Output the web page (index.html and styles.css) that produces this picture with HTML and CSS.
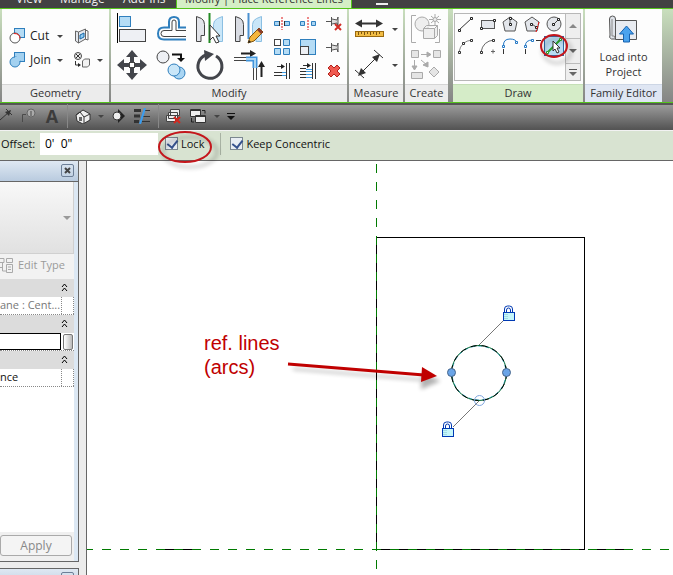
FILE: index.html
```
<!DOCTYPE html>
<html lang="en">
<head>
    <meta charset="UTF-8">
    <title>Place Reference Lines</title>
    <link rel="stylesheet" href="styles.css">
</head>
<body>
    <!-- Ribbon tabs -->
    <nav class="tabs">
        <a href="#" class="tab tab-view">View</a>
        <a href="#" class="tab tab-manage">Manage</a>
        <a href="#" class="tab tab-addins">Add-Ins</a>
        <a href="#" class="tab active">Modify | Place Reference Lines</a>
        <button class="tab-toggle" aria-label="Minimize ribbon"><i class="box"></i></button>
    </nav>

    <!-- Ribbon panels -->
    <div class="ribbon">
        <section class="panel geometry">
            <div class="panel-body">
                <button class="tool"><svg width="16" height="16"><rect x="5.500" y=".5" width="10" height="9" fill="#b5dcf5" stroke="#2f7fbd"/><circle cx="6" cy="10" r="5" fill="#fff" stroke="#555"/><path d="M5 5.500q6 0 6 5" fill="none" stroke="#e22"/></svg>Cut</button>
                <button class="drop" aria-label="Cut options"></button>
                <button class="tool" aria-label="Split face"><svg width="16" height="16"><path d="M1.500 3l3 1 7-3v10l-7 4-3-2z" fill="#e4e8ee" stroke="#666"/><path d="M4.500 4v11M11 2l3 1v9l-3-1" fill="none" stroke="#666"/><path d="M6 7l4-2v4l-4 2z" fill="#8ecbf2" stroke="#1767a8"/></svg></button>
                <span></span>
                <button class="tool"><svg width="16" height="16"><rect x="5.500" y=".5" width="10" height="9" fill="#a3d1f0" stroke="#2f7fbd"/><circle cx="6" cy="10" r="5" fill="#a3d1f0" stroke="#2f7fbd"/><path d="M6 6h4v3" fill="none" stroke="#a3d1f0" stroke-width="2"/></svg>Join</button>
                <button class="drop" aria-label="Join options"></button>
                <button class="tool" aria-label="Demolish"><svg width="16" height="16"><circle cx="4" cy="4" r="3.500" fill="#eee" stroke="#444"/><path d="M2 2l4 4M6 2L2 6M1.500 9v4H5" fill="none" stroke="#333"/><path d="M4 11l3 2-3 2z" fill="#222"/><path d="M8.500 9l2-2h5v6l-2 2h-5z" fill="#f3f3f3" stroke="#666"/></svg></button>
                <button class="drop" aria-label="Demolish options"></button>
            </div>
            <h2>Geometry</h2>
        </section>

        <section class="panel modify">
            <div class="panel-body">
                <div class="big-tools">
                    <button aria-label="Align"><svg width="32" height="32"><path d="M1.500 1v30" stroke="#000"/><rect x="3.500" y="4.500" width="11" height="10" fill="#b5dcf5" stroke="#2f7fbd"/><rect x="3.500" y="17.500" width="26" height="12" fill="#eef0f4" stroke="#444"/></svg></button>
                    <button aria-label="Offset"><svg width="32" height="32"><path d="M31 15.500h-7V10q0-5-5-5t-5 5v5.500H9q-6 0-6 6t6 6h22" fill="none" stroke="#2f7fbd" stroke-width="2"/><path d="M31 18.500H21V10q0-2-2-2t-2 2v8.500H9q-3 0-3 3t3 3h22" fill="none" stroke="#444"/></svg></button>
                    <button aria-label="Mirror - Pick Axis"><svg width="32" height="32"><path d="M2.500 4.500l5 2q3 2 3 6v11H7v6H2.500z" fill="#e3e5ea" stroke="#444"/><path d="M28.500 4.500l-5 2q-4 2-4 6v11H23v6h5.500z" fill="#c9e6f8" stroke="#8bbfe2"/><path d="M15.500 1v30" stroke="#238b23" stroke-width="2"/><path d="M16 13v15l3-3 3 6 3-1-3-6h4z" fill="#fff" stroke="#333"/></svg></button>
                    <button aria-label="Mirror - Draw Axis"><svg width="32" height="32"><path d="M2.500 4.500l5 2q3 2 3 6v11H7v6H2.500z" fill="#d9dce3" stroke="#444"/><path d="M28.500 4.500l-5 2q-4 2-4 6v11H23v6h5.500z" fill="#c9e6f8" stroke="#8bbfe2"/><path d="M15.500 1v26" stroke="#4b91d0" stroke-width="2"/><path d="M15 31l2-6 9-9 4 4-9 9z" fill="#f4b63e" stroke="#80530d"/><path d="M24 18l2-2 4 4-2 2z" fill="#8d3d2d"/><path d="M15 31l1-3 2 2z" fill="#222"/></svg></button>
                    <button aria-label="Move"><svg width="32" height="32"><path d="M16 1l6 7h-4v5h-4V8h-4zM16 31l6-7h-4v-5h-4v5h-4zM1 16l7-6v4h5v4H8v4zM31 16l-7-6v4h-5v4h5v4z" fill="#43454b"/><rect x="13.500" y="13.500" width="5" height="5" fill="#fff" stroke="#444"/></svg></button>
                    <button aria-label="Copy"><svg width="32" height="32"><circle cx="8" cy="8" r="6" fill="#eef0f4" stroke="#444"/><path d="M17 5.500h9v4" fill="none" stroke="#111" stroke-width="2"/><path d="M22 9h8l-4 4z" fill="#111"/><circle cx="24" cy="24" r="6" fill="#a9d5f3" stroke="#2f7fbd"/><circle cx="19" cy="21" r="6" fill="#c9e6f8" stroke="#2f7fbd"/></svg></button>
                    <button aria-label="Rotate"><svg width="32" height="32"><path d="M12 6A12 12 0 1 0 22 7" fill="none" stroke="#43454b" stroke-width="3"/><path d="M10 1l10 4-9 7z" fill="#43454b"/></svg></button>
                    <button aria-label="Trim"><svg width="32" height="32"><path d="M8 4.500h10M28.500 28V17" stroke="#222" stroke-width="2"/><path d="M17 1l6 3.500-6 3.500zM25 18l3.500-6 3.500 6z" fill="#222"/><path d="M1 8.500h12M1 11.500h12M20.500 19v12M23.500 19v12" stroke="#444"/><path d="M13 10h9v9" fill="none" stroke="#4295dc" stroke-width="5"/><path d="M13 10h9v9" fill="none" stroke="#a9d5f3" stroke-width="2"/></svg></button>
                </div>
                <div class="small-tools">
                    <button aria-label="Split element"><svg width="18" height="18"><path d="M1.500 7.500h5v4h-5zM11.500 7.500h5v4h-5z" fill="#a9d5f3" stroke="#2f7fbd"/><path d="M6.500 7v5M11.500 7v5" stroke="#333"/><path d="M9 3v13" stroke="#d11" stroke-dasharray="2 1"/></svg></button>
                    <button aria-label="Split with gap"><svg width="18" height="18"><path d="M1.500 7.500h4v4h-4zM12.500 7.500h4v4h-4z" fill="#a9d5f3" stroke="#2f7fbd"/><path d="M9 3v13" stroke="#d11" stroke-dasharray="2 1"/></svg></button>
                    <button aria-label="Unpin"><svg width="18" height="18"><path d="M1 7.500h5M6.500 3v9M7 5l5 1 1-3v9l-1-3-5 1" fill="#ddd" stroke="#555"/><path d="M10 10l6 6M16 10l-6 6" stroke="#d22d25" stroke-width="2"/></svg></button>
                    <button aria-label="Array"><svg width="18" height="18"><rect x="1.500" y="1.500" width="6" height="6" fill="#fff" stroke="#444"/><path d="M10.500 1.500h6v6h-6zM1.500 10.500h6v6h-6zM10.500 10.500h6v6h-6z" fill="#b5dcf5" stroke="#2f7fbd"/></svg></button>
                    <button aria-label="Scale"><svg width="18" height="18"><rect x="1.500" y="1.500" width="15" height="15" fill="#b5dcf5" stroke="#2f7fbd"/><rect x="1.500" y="8.500" width="8" height="8" fill="#eef0f4" stroke="#444"/></svg></button>
                    <button aria-label="Pin"><svg width="18" height="18"><path d="M1 9.500h5M6.500 5v9M7 7l5 1 1-3v9l-1-3-5 1" fill="#ddd" stroke="#555"/></svg></button>
                    <button aria-label="Trim single"><svg width="18" height="18"><path d="M4 4.500h5M1 10.500h8M1 13.500h8M13.500 1v16M16.500 1v16" stroke="#333"/><path d="M8 2l4 2.500L8 7z" fill="#222"/><path d="M9 10.500h4M9 13.500h4" stroke="#3e9be0"/></svg></button>
                    <button aria-label="Trim multiple"><svg width="18" height="18"><path d="M4 3.500h5M1 6.500h6M1 9.500h6M1 12.500h6M1 15.500h6M13.500 1v16M16.500 1v16" stroke="#333"/><path d="M8 1l4 2.500L8 6z" fill="#222"/><path d="M7 7.500h6M7 9.500h6M7 12.500h6M7 15.500h6" stroke="#3e9be0"/></svg></button>
                    <button aria-label="Delete"><svg width="18" height="18"><path d="M3 6l3-3 3 3 3-3 3 3-3 3 3 3-3 3-3-3-3 3-3-3 3-3z" fill="#f05a50" stroke="#b3221b"/></svg></button>
                </div>
            </div>
            <h2>Modify</h2>
        </section>

        <section class="panel measure">
            <div class="panel-body">
                <button aria-label="Measure"><svg width="32" height="32"><path d="M5 10.500h20" stroke="#333" stroke-width="2"/><path d="M1 10.500l7-4v8zM29 10.500l-7-4v8z" fill="#333"/><rect x="1.500" y="18.500" width="28" height="5" fill="#f2bd45" stroke="#9a6a10"/><path d="M4.500 19v3M7.500 19v2M10.500 19v3M13.500 19v2M16.500 19v3M19.500 19v2M22.500 19v3M25.500 19v2" stroke="#7a5410"/></svg></button>
                <button class="drop" aria-label="Measure options"></button>
                <button aria-label="Dimension"><svg width="32" height="32"><path d="M6 25L24 7M1 21l9 8M20 1l9 8" stroke="#333"/><path d="M4 27l3-8 5 5zM26 5l-8 3 5 5z" fill="#333"/></svg></button>
                <button class="drop" aria-label="Dimension options"></button>
            </div>
            <h2>Measure</h2>
        </section>

        <section class="panel create">
            <div class="panel-body">
                <button disabled aria-label="Create group"><svg width="32" height="32" fill="#eee" stroke="#aaa"><path d="M6 2.500H1.500v27H6M25 29.500h4.500V16" fill="none"/><circle cx="12" cy="11" r="7"/><path d="M13.500 15.500l3-3h11v10l-3 3h-11zM13.500 15.500h11l3-3M24.500 15.500v10"/><path d="M25 1v11M19 6.500h12M21 3l8 7M29 3l-8 7"/><circle cx="25" cy="6.500" r="2"/></svg></button>
                <button disabled aria-label="Create similar"><svg width="32" height="32" fill="#e5e5e5" stroke="#aaa"><path d="M1.500 1.500h7v7h-7zM23.500 1.500h7v7h-7zM1.500 23.500h11v6h-11zM24 18l5 5-5 5-5-5z"/><path d="M11 5.500h8M4.500 11v7M11 11l6 5" fill="none"/><path d="M17 3l4 2.500-4 2.500zM2 17h5l-2.500 4zM13 16l5-3v5z" fill="#aaa"/></svg></button>
            </div>
            <h2>Create</h2>
        </section>

        <section class="panel draw">
            <div class="panel-body">
                <div class="gallery">
                    <div class="shapes">
                        <button aria-label="Line"><svg width="18" height="18"><path d="M2 15L15 3" stroke="#333"/><path d="M1.500 14.500h2v2h-2zM13.500 2.500h2v2h-2z" fill="#fff" stroke="#222"/></svg></button>
                        <button aria-label="Rectangle"><svg width="18" height="18"><rect x="2.500" y="5.500" width="13" height="8" fill="#e3e6eb" stroke="#555"/><path d="M1.500 12.500h2v2h-2zM14.500 4.500h2v2h-2z" fill="#fff" stroke="#222"/></svg></button>
                        <button aria-label="Inscribed polygon"><svg width="18" height="18"><path d="M9 2l7 5-2 9H4L2 7zM9 9V3" fill="#e3e6eb" stroke="#555"/><path d="M8.500 8.500h2v2h-2zM8.500 2.500h2v2h-2z" fill="#fff" stroke="#222"/></svg></button>
                        <button aria-label="Circumscribed polygon"><svg width="18" height="18"><path d="M9 2l7 5-2 9H4L2 7zM9 9l4 3" fill="#e3e6eb" stroke="#555"/><path d="M7.500 8.500h2v2h-2zM12.500 11.500h2v2h-2z" fill="#fff" stroke="#222"/><path d="M16 7l-3 10" stroke="#e11" stroke-dasharray="3 1"/></svg></button>
                        <button aria-label="Circle"><svg width="18" height="18"><circle cx="9" cy="9" r="7" fill="#e3e6eb" stroke="#555"/><path d="M9 9l4-4" stroke="#444"/><path d="M7.500 8.500h2v2h-2zM12.500 3.500h2v2h-2z" fill="#fff" stroke="#222"/></svg></button>
                        <button aria-label="Start-end-radius arc"><svg width="18" height="18"><path d="M2 15Q4 4 15 3" fill="none" stroke="#888"/><path d="M1.500 14.500h2v2h-2zM5.500 5.500h2v2h-2zM13.500 2.500h2v2h-2z" fill="#fff" stroke="#333"/></svg></button>
                        <button aria-label="Center-ends arc"><svg width="18" height="18"><path d="M2 15Q4 4 15 3M12 14.500h4M14 12.500v4" fill="none" stroke="#666"/><path d="M1.500 14.500h2v2h-2zM13.500 2.500h2v2h-2z" fill="#fff" stroke="#333"/></svg></button>
                        <button aria-label="Tangent end arc"><svg width="18" height="18"><path d="M2.500 9Q2 2 9 2q6 0 7 4" fill="none" stroke="#2478c5"/><path d="M2.500 12v5" stroke="#333"/><path d="M1.500 8.500h2v2h-2zM14.500 4.500h2v2h-2z" fill="#fff" stroke="#2478c5"/></svg></button>
                        <button aria-label="Fillet arc"><svg width="18" height="18"><path d="M2.500 9Q2 3 10 3" fill="none" stroke="#2478c5"/><path d="M2.500 12v5M13 3.500h5" stroke="#333"/><path d="M1.500 8.500h2v2h-2zM8.500 2.500h2v2h-2z" fill="#fff" stroke="#2478c5"/></svg></button>
                        <button class="selected" aria-label="Pick lines"><svg width="18" height="18"><path d="M3 15L15 3" stroke="#29a329" stroke-width="2"/><path d="M1.500 14.500h2v2h-2zM14.500 1.500h2v2h-2z" fill="#fff" stroke="#29a329"/><path d="M8 4v10l2-2 2 4 2-1-2-4h3z" fill="#fff" stroke="#333"/></svg>
                            <svg class="callout pick-ring" width="40" height="34"><ellipse class="soft" cx="21" cy="20" rx="14" ry="12"/><ellipse class="ring" cx="18" cy="15" rx="13" ry="11"/></svg></button>
                    </div>
                    <div class="scroller">
                        <button class="up" aria-label="Scroll up"></button>
                        <button class="down" aria-label="Scroll down"></button>
                        <button class="more" aria-label="More"></button>
                    </div>
                </div>
            </div>
            <h2>Draw</h2>
        </section>

        <section class="panel family">
            <div class="panel-body">
                <button class="load"><svg width="32" height="28"><path d="M7.500 5.500h21v19h-21z" fill="#e9ecf1" stroke="#555"/><path d="M1.500 4q0-3 3-3t3 3v20h-4q-3-1-1.500-4z" fill="#dfe3e9" stroke="#555"/><path d="M4 4v17q3-1 3 2" fill="none" stroke="#888"/><path d="M18.500 11l7 8h-4v8h-6v-8h-4z" fill="#4ba3ee" stroke="#1662b0"/></svg>
                    <span>Load into<br>Project</span></button>
            </div>
            <h2>Family Editor</h2>
        </section>
    </div>

    <!-- Quick access toolbar -->
    <div class="quick">
        <button aria-label="Aligned dimension"><svg width="14" height="16"><path d="M0 12l9-8M6 1l6 6" stroke="#333"/><path d="M11 2L5 4l4 4z" fill="#333"/></svg></button>
        <button aria-label="Tag"><svg width="16" height="16"><circle cx="10" cy="5" r="4" fill="#aaa" stroke="#666"/><path d="M10 3v5M5 6.500H1.500V14" fill="none" stroke="#4a4a4a"/></svg></button>
        <button class="text-tool">A</button>
        <i class="sep"></i>
        <button aria-label="3D view"><svg width="16" height="16"><path d="M1 7l7-5 7 4v6l-7 4-6-3z" fill="#eee" stroke="#333"/><path d="M1 7l4-3 4 5v6M9 9l6-3" fill="none" stroke="#333"/><path d="M4 9h3v4H4z" fill="#666"/></svg></button>
        <button class="drop" aria-label="3D options"></button>
        <button aria-label="Section"><svg width="16" height="16"><path d="M8 1l7 7-7 7z" fill="#222"/><circle cx="7" cy="8" r="4" fill="#eee" stroke="#333"/></svg></button>
        <button aria-label="Thin lines"><svg width="18" height="16"><path d="M1 2.500h7M1 8h6M1 13.500h5" stroke="#333" stroke-width="3"/><path d="M11 2.500h6M10 8.500h7M9 13.500h8" stroke="#333"/><path d="M12 0L7 16" stroke="#3a9df0" stroke-width="2"/></svg></button>
        <i class="sep"></i>
        <button aria-label="Close hidden windows"><svg width="16" height="16"><path d="M4.500 1.500h9v6h-9zM2.500 4.500h9v6h-9zM.5 7.500h9v6h-9z" fill="#eee" stroke="#444"/><path d="M8 9l6 6M14 9l-6 6" stroke="#d3271e" stroke-width="2"/></svg></button>
        <button aria-label="Switch windows"><svg width="18" height="16"><path d="M1.500 1.500h10v7h-10zM6.500 7.500h10v7h-10z" fill="#eee" stroke="#333"/><path d="M1 2.500h11M6 8.500h11" stroke="#333"/><path d="M13 2.500h3v3M2.500 10v4H5" fill="none" stroke="#222"/></svg></button>
        <button class="drop" aria-label="Window options"></button>
        <button class="customize" aria-label="Customize"></button>
    </div>

    <!-- Options bar -->
    <form class="options">
        <label for="offset">Offset:</label>
        <input type="text" id="offset" value="0'  0&quot;">
        <div class="check lock">
            <input type="checkbox" id="lock" checked>
            <label for="lock">Lock</label>
            <svg class="callout lock-ring" width="64" height="42"><ellipse class="soft" cx="33" cy="22" rx="27" ry="15"/><ellipse class="ring" cx="28" cy="17" rx="26" ry="15"/></svg>
        </div>
        <div class="check">
            <input type="checkbox" id="concentric" checked>
            <label for="concentric">Keep Concentric</label>
        </div>
    </form>

    <div class="workspace">
        <div class="dock">
            <aside class="palette">
                <header><button class="close" aria-label="Close"><svg width="7" height="7"><path d="M1 1l5 5M6 1L1 6" stroke="#444" stroke-width="2"/></svg></button></header>
                <button class="type-selector" aria-label="Type selector"><i class="arrow"></i></button>
                <button class="edit-type" disabled><svg width="14" height="16" fill="none" stroke="#aaa"><path d="M0 1.500h4v4H0M6.500 1.500h6v4h-6zM2.500 6v8H6M0 10.500h3"/><path d="M6.500 7.500h6v8h-6zM8 10h3M8 12.500h3"/></svg>Edit Type</button>
                <h3><svg class="chevrons" width="7" height="8"><path d="M1 4l2.500-3L6 4M1 8l2.500-3L6 8"/></svg></h3>
                <div class="prop muted"><span>ane : Cent...</span><i></i></div>
                <h3><svg class="chevrons" width="7" height="8"><path d="M1 4l2.500-3L6 4M1 8l2.500-3L6 8"/></svg></h3>
                <div class="prop"><input type="text" aria-label="Value"><button aria-label="Associate parameter"></button></div>
                <h3><svg class="chevrons" width="7" height="8"><path d="M1 4l2.500-3L6 4M1 8l2.500-3L6 8"/></svg></h3>
                <div class="prop"><span>nce</span><i></i></div>
                <footer><button disabled>Apply</button></footer>
            </aside>
            <aside class="palette next"><header><button class="close" aria-label="Close browser"></button></header></aside>
        </div>

        <main class="canvas">
            <svg width="100%" height="100%">
                <rect x="289.500" y="76.500" width="208" height="312" fill="none" stroke="#000"/>
                <path d="M78 388.500h36M501 388.500h37" stroke="#000"/>
                <!-- reference planes -->
                <path d="M289.500 3V600M-3 388.500H2000" stroke="#007a00" stroke-dasharray="9 9"/>
                <!-- picked arcs -->
                <path d="M392 184l24-24M392 240l-26 26" stroke="#777"/>
                <circle cx="392" cy="212" r="27" fill="none" stroke="#3ba5d8" stroke-dasharray="4 3"/>
                <circle cx="392" cy="212" r="27.500" fill="none" stroke="#063"/>
                <circle cx="392" cy="212" r="27.500" fill="none" stroke="#000" stroke-dasharray="6 5"/>
                <g fill="#6ba5e8" stroke="#47668c"><circle cx="364.500" cy="211.500" r="4"/><circle cx="419.500" cy="211.500" r="4"/></g>
                <circle cx="392.500" cy="239.500" r="5" fill="none" stroke="#82a8e0"/>
                <g id="padlock" stroke="#0039b3"><path d="M417.500 151v-3q0-3 3-3h2q3 0 3 3v3M419.500 151v-2q0-2 2-2t2 2v2" fill="none"/><rect x="416.500" y="151.500" width="11" height="8" fill="#c5f6fa"/><path d="M418 153v6M420 153v6" stroke="#7fc4cf" stroke-dasharray="1 1"/></g>
                <use href="#padlock" x="-61" y="116"/>
                <!-- annotation -->
                <path class="shadow" d="M206 208l132 11M336 213l15 7-16 7z"/>
                <path d="M201 203l136 11" stroke="#c00000" stroke-width="3"/>
                <path d="M335 206l15 9-16 6z" fill="#c00000"/>
                <text class="note"><tspan x="117" y="189">ref. lines</tspan><tspan x="117" y="213">(arcs)</tspan></text>
            </svg>
        </main>
    </div>
</body>
</html>
```
FILE: styles.css
```
* { box-sizing: border-box; }
body { margin: 0; height: 100vh; display: flex; flex-direction: column; overflow: hidden; font: 11px/16px "Open Sans", sans-serif; color: #222; background: #fff; }
button { margin: 0; padding: 0; border: 0; background: none; font: inherit; color: inherit; }
svg { display: block; }
h2, h3 { margin: 0; font: inherit; }

/* tabs */
.tabs { display: flex; align-items: flex-end; flex: none; height: 8px; background: #424242; overflow: hidden; }
.tab { color: #eee; text-decoration: none; line-height: 16px; font-size: 12px; height: 17px; white-space: nowrap; }
.tab-view { width: 44px; margin-left: 16px; }
.tab-manage { width: 63px; }
.tab-addins { width: 53px; }
.tab.active { padding: 0 8px; font-size: 11px; color: #333; background: #d5efc6; border: solid #54c41c; border-width: 0 1px; }
.tab-toggle { height: 8px; margin-left: 24px; }
.tab-toggle .box { display: block; width: 12px; height: 2px; background: #eee; }

/* ribbon */
.ribbon { display: flex; flex: none; gap: 2px; padding-left: 2px; border: solid #54c41c; border-width: 1px 0; background: linear-gradient(#c9dfbd, #858585); }
.panel { display: flex; flex-direction: column; background: #fdfdfd; }
.panel-body { height: 75px; }
.panel h2 { height: 18px; line-height: 16px; text-align: center; color: #333; background: #ececec; border-top: 1px solid #d5d5d5; white-space: nowrap; }
.geometry { width: 107px; }
.geometry .panel-body { display: grid; grid-template-columns: 45px 20px 20px 10px; grid-template-rows: 24px 24px; align-items: center; padding: 15px 0 0 7px; }
.tool { display: flex; gap: 5px; align-items: center; font-size: 12px; }
.drop { width: 5px; height: 16px; display: flex; align-items: center; }
.drop::before { content: ""; border: solid transparent; border-width: 3px 3px 0; border-top-color: #444; }
.geometry .drop { margin-left: 3px; }
.modify { width: 236px; }
.modify .panel-body { display: flex; gap: 8px; padding: 3px 0 0 5px; }
.big-tools { display: grid; grid-template-columns: repeat(4, 32px); gap: 5px 7px; align-content: start; }
.small-tools { display: grid; grid-template-columns: repeat(3, 18px); gap: 6px 8px; align-content: start; padding-top: 2px; }
.measure { width: 54px; }
.measure .panel-body { display: grid; grid-template-columns: 32px 5px; gap: 4px 6px; align-content: start; align-items: center; padding: 4px 0 0 5px; }
.create { width: 43px; }
.create .panel-body { padding: 4px 0 0 5px; display: grid; gap: 4px; align-content: start; }
.draw { width: 130px; margin-left: 3px; }
.draw h2 { background: #d5ecc8; border-color: #c5dfb7; }
.draw .panel-body { padding: 4px 2px 3px 1px; }
.gallery { display: flex; height: 68px; border: 1px solid #b7b7b7; }
.shapes { flex: 1; display: grid; grid-template-columns: repeat(5, 18px); gap: 4px; align-content: start; padding: 1px 0 0 2px; }
.shapes button { width: 18px; height: 18px; }
.selected { position: relative; background: #b9dcf2; outline: 1px solid #2d6ca8; }
.scroller { width: 15px; display: flex; flex-direction: column; border-left: 1px solid #bbb; background: #eee; }
.scroller button { flex: 1; display: flex; align-items: center; justify-content: center; border-bottom: 1px solid #bbb; }
.scroller button::before { content: ""; border: 4px solid transparent; border-top-color: #666; border-bottom: 0; }
.scroller .up::before { border-top: 0; border-bottom: 4px solid #888; }
.scroller .more { flex: none; height: 16px; border: 0; flex-direction: column; gap: 2px; }
.scroller .more::after { content: ""; order: -1; width: 8px; height: 1px; background: #555; }
.family { width: 77px; }
.family h2 { background: #dfe6f3; border-color: #cdd6e5; }
.load { display: flex; flex-direction: column; align-items: center; gap: 6px; width: 100%; padding-top: 6px; line-height: 15px; color: #333; }

/* red rings over a control */
.callout { position: absolute; pointer-events: none; z-index: 2; overflow: visible; }
.ring { fill: none; stroke: #c4161c; stroke-width: 2; }
.soft { fill: none; stroke: #000; stroke-width: 3; opacity: .2; filter: blur(2px); }
.pick-ring { left: -9px; top: -6px; }
.lock-ring { left: -8px; top: -3px; }

/* quick access toolbar */
.quick { display: flex; flex: none; align-items: center; gap: 7px; height: 27px; padding-bottom: 2px; border: solid #555; border-width: 2px 0 1px; background: linear-gradient(#9b9b9b, #555); }
.text-tool { width: 16px; font: bold 18px/20px "Open Sans", sans-serif; color: #3c3c3c; }
.sep { width: 1px; height: 24px; background: #888; }
.customize { width: 8px; margin-left: 1px; }
.customize::before { content: ""; display: block; height: 1px; background: #111; margin-bottom: 2px; }
.customize::after { content: ""; display: block; width: 0; border: 4px solid transparent; border-top-color: #111; border-bottom: 0; }

/* options bar */
.options { display: flex; flex: none; align-items: center; height: 30px; padding-bottom: 4px; border-top: 1px solid #f2f2f2; background: #d8e3d1; color: #111; }
.options > label { width: 40px; padding-left: 1px; }
#offset { width: 118px; height: 22px; padding: 0 5px 1px; border: 0; background: #fff; font: inherit; font-size: 12px; white-space: pre; }
.check { display: flex; align-items: center; gap: 3px; position: relative; margin-left: 9px; }
.check input { appearance: none; width: 13px; height: 13px; margin: 0; border: 1px solid #7b8790; background: #e8edf3; }
.check input:checked::before { content: ""; display: block; width: 5px; height: 8px; margin: 0 0 0 3px; border: solid #36528e; border-width: 0 2px 2px 0; transform: rotate(38deg); }
.check.lock { margin-left: 7px; padding-right: 16px; border-right: 1px solid #a8b2a3; height: 22px; }

/* workspace */
.workspace { display: flex; flex: 1; min-height: 0; border-top: 1px solid #666; background: #ececec; }
.dock { width: 79px; flex: none; display: flex; flex-direction: column; gap: 6px; margin-right: 7px; }
.palette { flex: 1; display: flex; flex-direction: column; min-height: 0; padding-right: 4px; border: solid #666; border-width: 0 1px 1px 0; background: linear-gradient(#fff, #fff) content-box, #dce8f4; }
.palette header { flex: none; height: 21px; display: flex; justify-content: flex-end; margin-right: -4px; padding: 3px 4px; background: linear-gradient(#dfe8f2, #b9cbdf); border-bottom: 1px solid #666; }
.close { width: 13px; height: 13px; border: 1px solid #6d7f97; border-radius: 2px; display: grid; place-items: center; }
.type-selector { height: 72px; flex: none; display: flex; align-items: center; justify-content: flex-end; padding-right: 2px; background: linear-gradient(#f8f8f8, #e1e1e1); border: solid #d0d0d0; border-width: 0 1px 1px 0; }
.type-selector .arrow { border: 4px solid transparent; border-top-color: #999; border-bottom: 0; }
.edit-type { flex: none; height: 25px; padding-bottom: 3px; display: flex; align-items: center; gap: 4px; color: #9a9a9a; background: #f2f2f2; }
.palette h3 { flex: none; height: 18px; display: flex; justify-content: flex-end; padding: 4px 6px 0 0; background: #dcdcdc; }
.chevrons { fill: none; stroke: #000; }
.prop { flex: none; display: flex; height: 18px; line-height: 16px; border-bottom: 1px dotted #888; white-space: nowrap; color: #111; }
.prop.muted { color: #777; }
.prop span { flex: 1; overflow: hidden; }
.prop > i { width: 13px; border: dotted #888; border-width: 0 1px; }
.prop input { flex: 1; min-width: 0; border: 1px solid #000; border-left: 0; padding: 0; height: 17px; }
.prop button { width: 10px; height: 16px; margin: 1px 1px 0 2px; border: 1px solid #777; border-radius: 2px; background: linear-gradient(90deg, #fff, #bbb); }
.palette footer { margin-top: auto; height: 29px; padding: 3px 2px 5px 0; background: #f0f0f0; }
.palette footer button { width: 100%; height: 21px; border: 1px solid #aaa; border-radius: 3px; background: #f4f4f4; color: #888; font-size: 12px; line-height: 18px; }
.palette.next { flex: none; height: 7px; border-width: 1px 1px 0 0; overflow: hidden; }
.canvas { flex: 1; min-width: 0; background: #fff; border-left: 1px solid #666; }
.note { font: 20px "Liberation Sans", sans-serif; fill: #c00000; }
.shadow { fill: #000; stroke: #000; stroke-width: 2; opacity: .3; filter: blur(2px); }
```
